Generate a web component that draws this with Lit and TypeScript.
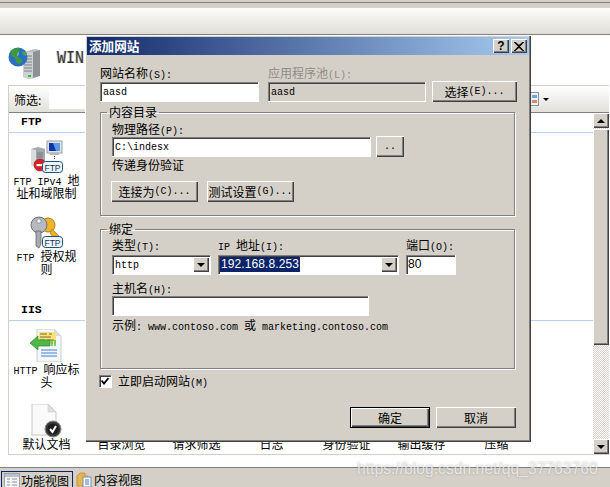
import { LitElement, html, css, svg } from "lit";
import { customElement } from "lit/decorators.js";

const badge = (x: number, y: number) => svg`
  <rect x=${x} y=${y} width="20" height="11" rx="3" fill="#eef6fc" stroke="#1d4f7a"/>
  <text x=${x + 10} y=${y + 9} text-anchor="middle" font-family="Liberation Sans" font-size="8.5" fill="#12324f">FTP</text>`;

const serverIcon = html`<svg width="33" height="33" viewBox="0 0 33 33">
  <polygon points="15,5 27,2 32,3 32,28 21,32 15,30" fill="#b9bcc0"/>
  <polygon points="25,5 32,3 32,29 25,31" fill="#8e9296"/>
  <polygon points="15,5 25,5 25,32 15,30" fill="#cfd2d4"/>
  <path d="M16 9l8 0M16 12l8 0M16 15l8 0M16 18l8 0M16 21l8 0M16 24l8 0" stroke="#7c8084" stroke-width="1"/>
  <rect x="20" y="28" width="3" height="2" fill="#35c53a"/>
  <circle cx="10" cy="10" r="9.5" fill="#2a6fc4"/>
  <circle cx="7" cy="6" r="4" fill="#7fb6ea" opacity=".8"/>
  <path d="M3 4c3-3 7-4 9-2 1 2-3 3-3 6 0 3 4 2 5 5 0 3-3 5-5 3-2-3-1-5-3-6-2 0-4-2-3-6z" fill="#3c9a3a"/>
  <path d="M14 5c2-1 4 0 5 3-1 1-3 1-4 0z" fill="#4aa844"/>
</svg>`;

const ftpLimitIcon = html`<svg width="33" height="33" viewBox="0 0 33 33">
  <polygon points="1,9 8,7 15,9 15,25 8,28 1,25" fill="#a4a8ac"/>
  <polygon points="1,9 6,10 6,27 1,25" fill="#d9dbdd"/>
  <path d="M7 13h6M7 15h6M7 17h6" stroke="#767a7e"/>
  <rect x="4" y="22" width="2" height="2" fill="#35c53a"/>
  <rect x="17" y="1" width="15" height="12" fill="#dfe3e6" stroke="#9aa0a6"/>
  <rect x="19" y="3" width="11" height="8" fill="#0b35b0"/>
  <polygon points="23,3 30,3 30,11 26,11" fill="#5d9be0"/>
  <rect x="20" y="13" width="9" height="2" fill="#b5b9bd"/>
  <path d="M24.5 16v4" stroke="#333" stroke-dasharray="1 1"/>
  <circle cx="10" cy="25" r="6" fill="#d81f26" stroke="#8d1216" stroke-width=".6"/>
  <rect x="6.5" y="24" width="7" height="2.2" fill="#fff"/>
  ${badge(12.5, 21.5)}
</svg>`;

const keyIcon = html`<svg width="33" height="33" viewBox="0 0 33 33">
  <circle cx="18" cy="9" r="7" fill="#f0b429" stroke="#b27a10"/>
  <circle cx="15" cy="7" r="2" fill="#fff"/>
  <path d="M22 13l9 9-2 2-2-1-1 2-6-8z" fill="#efae25" stroke="#b27a10" stroke-width=".8"/>
  <circle cx="9" cy="9" r="8" fill="#b6babf" stroke="#6c7075"/>
  <circle cx="9" cy="5" r="2.2" fill="#f4f4f4" stroke="#6c7075" stroke-width=".6"/>
  <path d="M6 15h5v13l-2 4-3-2z" fill="#a7abb0" stroke="#63676c" stroke-width=".8"/>
  ${badge(12.5, 20.5)}
</svg>`;

const httpDocIcon = html`<svg width="33" height="33" viewBox="0 0 33 33">
  <polygon points="7,0 24,0 31,7 31,33 7,33" fill="#f4f7fa" stroke="#c9ccd0"/>
  <polygon points="24,0 31,7 24,7" fill="#d9dcdf"/>
  <rect x="9" y="3" width="17" height="12" fill="#f7e37c"/>
  <path d="M10 5h7M19 5h3M10 8h11M10 11h5M17 11h7" stroke="#7d6a30" stroke-width="1.2"/>
  <path d="M11 21h16M11 24h16M11 27h16" stroke="#3f7ed0"/>
  <polygon points="0,14 8,7 8,11 20,11 20,17 8,17 8,21" fill="#4fb648" stroke="#2f8a2b" stroke-width=".7"/>
  <path d="M22 11v6M25 11v6" stroke="#4fb648" stroke-width="1.4"/>
</svg>`;

const defaultDocIcon = html`<svg width="33" height="34" viewBox="0 0 33 34">
  <polygon points="2,0 18,0 26,8 26,31 2,31" fill="#fafafa" stroke="#c4c6c9"/>
  <polygon points="18,0 26,8 18,8" fill="#dcdee0" stroke="#c4c6c9" stroke-width=".5"/>
  <circle cx="23" cy="25" r="8" fill="#3a3a3a" stroke="#8a8a8a"/>
  <circle cx="23" cy="25" r="5.6" fill="#1d1d1d"/>
  <path d="M20 25l2.5 3 3.5-6" fill="none" stroke="#fff" stroke-width="2"/>
</svg>`;

const l = (s: string) => html`<span class="l">${s}</span>`;

@customElement("app-root")
export class AppRoot extends LitElement {
  static styles = css`
    :host {
      display: flex;
      flex-direction: column;
      position: relative;
      width: 610px;
      height: 487px;
      overflow: hidden;
      background: #fff;
      color: #000;
      font: 12px/13px "Noto Sans CJK SC", "Liberation Sans", sans-serif;
    }
    .l { font: 10px/1px "Liberation Mono", monospace; white-space: pre; }
    .top1 { height: 2px; background: #d4d0c8; border-bottom: 1px solid #808080; }
    .top2 { height: 5px; background: #d4d0c8; }
    .top3 { height: 26px; background: linear-gradient(#fdfdfc, #dfddd6); border-bottom: 1px solid #808080; }
    .main { flex: 1; display: flex; flex-direction: column; padding: 0 0 12px 8px; min-height: 0; }
    .head { height: 50px; display: flex; padding-top: 12px; box-sizing: border-box; }
    .head .win { font: 15px/17px "Liberation Mono", monospace; margin: 1px 0 0 16px; transform: scaleY(1.25); transform-origin: top; text-shadow: 1px 0 rgba(220,120,20,.3), -1px 0 rgba(20,110,220,.3); color: #333; }
    .panel { flex: 1; display: flex; flex-direction: column; min-height: 0; border: 1px solid #d4d0c8; border-top: 0; margin-right: 1px; border-right: 0; }
    .toolbar { height: 26px; display: flex; align-items: center; background: linear-gradient(#fff, #e2e0da); border-top: 1px solid #d4d0c8; border-bottom: 1px solid #808080; box-sizing: content-box; }
    .filter { margin-left: 5px; width: 35px; flex: none; }
    .filter-in { width: 60px; height: 20px; background: #fff; }
    .tool-right { margin-left: auto; display: flex; align-items: center; gap: 4px; margin-right: 60px; }
    .tiny { width: 0; height: 0; border: 3px solid transparent; border-bottom: 0; border-top: 3px solid #000; }
    .body { flex: 1; display: flex; min-height: 0; }
    .list { flex: 1; overflow: hidden; min-width: 0; }
    .ghead { font: bold 11.5px/15px "Liberation Mono", monospace; padding-left: 12px; height: 18px; border-bottom: 1px solid #b7d2ee; margin-top: 1px; }
    .grid { display: grid; grid-template-columns: repeat(7, 75px); grid-auto-rows: 75px; padding-top: 8px; }
    .grid.ftp { grid-auto-rows: 76px; height: 168px; box-sizing: border-box; padding-top: 7px; }
    .item { display: flex; flex-direction: column; align-items: center; text-align: center; padding: 0 4px; }
    .item .ic { height: 33px; width: 33px; }
    .first { grid-column: 1; }
    .sb { width: 16px; flex: none; display: flex; flex-direction: column; background: repeating-conic-gradient(#d4d0c8 0 25%, #fff 0 50%) 0 0 / 2px 2px; }
    .sbtn { height: 15px; display: flex; align-items: center; justify-content: center; flex: none; }
    .thumb { height: 216px; flex: none; margin-top: 1px; }
    .raised { background: #d4d0c8; box-shadow: inset 1px 1px 0 #fff, inset -1px -1px 0 #404040, inset -2px -2px 0 #808080; }
    .sb .spacer { flex: 1; }
    .up { width: 0; height: 0; border: 4px solid transparent; border-top: 0; border-bottom: 4px solid #000; }
    .down { width: 0; height: 0; border: 4px solid transparent; border-bottom: 0; border-top: 4px solid #000; }
    .tabs { background: #d4d0c8; border-top: 1px solid #808080; display: flex; align-items: flex-start; padding: 3px 0 0 1px; box-sizing: content-box; height: 16px; overflow: hidden; }
    .tab { display: flex; align-items: flex-start; gap: 2px; height: 16px; white-space: nowrap; padding: 1px 0 0 2px; box-sizing: border-box; }
    .tab span { padding-top: 2px; line-height: 12px; }
    .tab.sel { border: 1px solid #0a246a; border-bottom: 0; width: 72px; height: 17px; background: #d4d0c8; gap: 1px; }
    .tab2 { margin-left: 1px; }
    .wm { position: absolute; left: 357px; top: 458px; font: 15.7px/22px "Liberation Sans", sans-serif; color: rgba(255,255,255,.68); text-shadow: 0 0 2px rgba(110,110,110,.55); z-index: 5; white-space: nowrap; }

    .dialog { position: absolute; left: 85px; top: 35px; width: 446px; height: 407px; box-sizing: border-box; background: #d4d0c8; z-index: 2; padding: 2px; box-shadow: inset 1px 1px 0 #fff, inset -1px -1px 0 #404040, inset -2px -2px 0 #808080; display: flex; flex-direction: column; }
    .title { height: 18px; flex: none; background: linear-gradient(90deg, #12296b, #a6caf0); color: #fff; font-weight: 700; font-size: 12.6px; line-height: 20px; display: flex; align-items: center; padding: 0 2px; }
    .title .t { flex: 1; }
    .cap { width: 16px; height: 14px; margin-left: 2px; display: flex; align-items: center; justify-content: center; font: bold 12px/14px "Liberation Sans", sans-serif; color: #000; }
    .form { flex: 1; padding: 10px 13px 0 13px; display: flex; flex-direction: column; }
    .row1 { display: grid; grid-template-columns: 159px 158px 85px; column-gap: 9px; }
    .row1 .f3 { display: flex; margin-left: -3px; width: 85px; align-self: end; }
    .row1 .f3 .btn { width: 85px; }
    .row1 .lbl { height: 17px; }
    .lbl { display: block; height: 16px; line-height: 16px; white-space: nowrap; }
    .dis { color: #8f8c86; }
    .in { height: 20px; box-sizing: border-box; background: #fff; box-shadow: inset 1px 1px 0 #808080, inset 2px 2px 0 #404040; border-right: 1px solid #fff; border-bottom: 1px solid #fff; font: 10px/22px "Liberation Mono", monospace; padding-left: 3px; white-space: nowrap; overflow: hidden; }
    .in.ro { background: #d4d0c8; }
    .btn { height: 21px; box-sizing: border-box; display: flex; align-items: center; justify-content: center; white-space: nowrap; background: #d4d0c8; box-shadow: inset 1px 1px 0 #fff, inset -1px -1px 0 #404040, inset -2px -2px 0 #808080; }
    fieldset { margin: 0; border: 0; padding: 0; min-width: 0; box-sizing: border-box; position: relative; }
    .grp { border: 1px solid #808080; box-shadow: 1px 1px 0 #fff, inset 1px 1px 0 #fff; width: 415px; padding: 0 11px; }
    .grp legend { margin-left: -5px; padding: 0 2px; font-size: 12px; line-height: 16px; height: 16px; }
    .g1 { height: 112px; margin-top: 2px; }
    .g2 { height: 148px; margin-top: 5px; }
    .g1 .lbl { height: 17px; padding-top: 1px; box-sizing: border-box; }
    .inline { display: flex; gap: 5px; }
    .g1 .p { width: 259px; }
    .g1 .bb { width: 28px; margin-top: -1px; }
    .pass { height: 16px; line-height: 16px; font-size: 12px; }
    .acts { display: flex; gap: 9px; margin: 8px 0 0 -1px; }
    .acts .btn { width: 87px; }
    .binds { display: grid; grid-template-columns: 98px 180px 50px; column-gap: 8px; }
    .select { height: 19px; box-sizing: border-box; display: flex; background: #fff; box-shadow: inset 1px 1px 0 #808080, inset 2px 2px 0 #404040, 1px 1px 0 #fff; padding: 2px 1px 1px 2px; margin-top: 2px; }
    .select .v { flex: 1; font: 10px/17px "Liberation Mono", monospace; padding-left: 1px; min-width: 0; }
    .select .ar { width: 16px; height: 15px; flex: none; display: flex; align-items: center; justify-content: center; }
    .hl { background: #0a246a; color: #fff; font: 12px/15px "Liberation Sans", sans-serif; letter-spacing: .1px; padding: 0 1px; display: inline-block; height: 15px; margin-left: -1px; }
    .port { font: 12px/19px "Liberation Sans", sans-serif; margin-top: 2px; padding-left: 2px; }
    .host { margin-top: 5px; }
    .host .in { width: 257px; }
    .eg { margin-top: 1px; height: 16px; line-height: 16px; white-space: nowrap; }
    .chk { display: flex; align-items: center; gap: 7px; margin: 4px 0 0 -1px; height: 16px; line-height: 16px; }
    .box { width: 12px; height: 12px; box-sizing: border-box; background: #fff; box-shadow: inset 1px 1px 0 #808080, inset 2px 2px 0 #404040, 1px 1px 0 #fff; display: flex; align-items: center; justify-content: center; }
    .foot { display: flex; justify-content: flex-end; gap: 6px; margin-top: 18px; }
    .foot .btn { width: 80px; }
    .foot .def { outline: 1px solid #000; outline-offset: -1px; box-shadow: inset 2px 2px 0 #fff, inset -2px -2px 0 #404040, inset -3px -3px 0 #808080; }
  `;

  render() {
    return html`
      <div class="top1"></div>
      <div class="top2"></div>
      <div class="top3"></div>
      <div class="main">
        <div class="head">${serverIcon}<span class="win">WIN</span></div>
        <div class="panel">
          <div class="toolbar">
            <span class="filter">筛选:</span>
            <div class="filter-in"></div>
            <div class="tool-right">
              <svg width="9" height="14" viewBox="0 0 9 14"><rect x=".5" y=".5" width="8" height="13" fill="#eef1f4" stroke="#8a9097"/><rect x="2" y="3" width="5" height="3" fill="#6ea6d8"/><rect x="2" y="8" width="5" height="3" fill="#d88a6e"/></svg>
              <span class="tiny"></span>
            </div>
          </div>
          <div class="body">
            <div class="list">
              <div class="ghead">FTP</div>
              <div class="grid ftp">
                <div class="item first"><div class="ic">${ftpLimitIcon}</div><div>${l("FTP IPv4 ")}地址和域限制</div></div>
                <div class="item first"><div class="ic">${keyIcon}</div><div>${l("FTP ")}授权规则</div></div>
              </div>
              <div class="ghead">IIS</div>
              <div class="grid">
                <div class="item first"><div class="ic">${httpDocIcon}</div><div>${l("HTTP ")}响应标头</div></div>
                <div class="item first"><div class="ic">${defaultDocIcon}</div><div>默认文档</div></div>
                <div class="item"><div class="ic"></div><div>目录浏览</div></div>
                <div class="item"><div class="ic"></div><div>请求筛选</div></div>
                <div class="item"><div class="ic"></div><div>日志</div></div>
                <div class="item"><div class="ic"></div><div>身份验证</div></div>
                <div class="item"><div class="ic"></div><div>输出缓存</div></div>
                <div class="item"><div class="ic"></div><div>压缩</div></div>
              </div>
            </div>
            <div class="sb">
              <div class="sbtn raised"><span class="up"></span></div>
              <div class="thumb raised"></div>
              <div class="spacer"></div>
              <div class="sbtn raised"><span class="down"></span></div>
            </div>
          </div>
        </div>
      </div>
      <div class="tabs">
        <div class="tab sel">
          <svg width="16" height="15" viewBox="0 0 16 15"><rect x=".5" y=".5" width="15" height="14" fill="#f4f6f8" stroke="#9aa3ab"/><rect x="1" y="1" width="14" height="3" fill="#b9c3cc"/><path d="M3 6h3M3 9h3M3 12h3M8 6h5M8 9h5M8 12h5" stroke="#8a949c"/></svg>
          <span>功能视图</span>
        </div>
        <div class="tab tab2">
          <svg width="16" height="16" viewBox="0 0 16 16"><path d="M1 14V4l3-3h5v3h3l-1 10z" fill="#e8b64c" stroke="#b8862a" stroke-width=".7"/><rect x="7" y="5" width="8" height="10" fill="#f4f6fa" stroke="#7d93b5"/><path d="M9 8h4M9 10h4M9 12h4" stroke="#4f7fc0"/></svg>
          <span>内容视图</span>
        </div>
      </div>

      <div class="dialog">
        <div class="title">
          <span class="t">添加网站</span>
          <span class="cap raised">?</span>
          <span class="cap raised">
            <svg width="10" height="9" viewBox="0 0 10 9"><path d="M1 0l4 3.3L9 0h1L5.7 4.5 10 9H9L5 5.5 1 9H0l4.3-4.5L0 0z" fill="#000" stroke="#000" stroke-width=".7"/></svg>
          </span>
        </div>
        <div class="form">
          <div class="row1">
            <div><span class="lbl">网站名称${l("(S):")}</span><div class="in">aasd</div></div>
            <div><span class="lbl dis">应用程序池${l("(L):")}</span><div class="in ro">aasd</div></div>
            <div class="f3"><div class="btn">选择${l("(E)...")}</div></div>
          </div>

          <fieldset class="grp g1">
            <legend>内容目录</legend>
            <span class="lbl">物理路径${l("(P):")}</span>
            <div class="inline">
              <div class="in p">C:\\indesx</div>
              <div class="btn bb">${l("..")}</div>
            </div>
            <div class="pass">传递身份验证</div>
            <div class="acts">
              <div class="btn">连接为${l("(C)...")}</div>
              <div class="btn">测试设置${l("(G)...")}</div>
            </div>
          </fieldset>

          <fieldset class="grp g2">
            <legend>绑定</legend>
            <div class="binds">
              <div>
                <span class="lbl">类型${l("(T):")}</span>
                <div class="select"><span class="v">http</span><span class="ar raised"><span class="down"></span></span></div>
              </div>
              <div>
                <span class="lbl">${l("IP ")}地址${l("(I):")}</span>
                <div class="select"><span class="v"><span class="hl">192.168.8.253</span></span><span class="ar raised"><span class="down"></span></span></div>
              </div>
              <div>
                <span class="lbl">端口${l("(O):")}</span>
                <div class="in port">80</div>
              </div>
            </div>
            <div class="host">
              <span class="lbl">主机名${l("(H):")}</span>
              <div class="in"></div>
            </div>
            <div class="eg">示例${l(": www.contoso.com ")}或${l(" marketing.contoso.com")}</div>
          </fieldset>

          <div class="chk">
            <span class="box"><svg width="8" height="8" viewBox="0 0 8 8"><path d="M.5 3.5l2.5 3L7.5 1" fill="none" stroke="#000" stroke-width="1.8"/></svg></span>
            <span>立即启动网站${l("(M)")}</span>
          </div>

          <div class="foot">
            <div class="btn def">确定</div>
            <div class="btn">取消</div>
          </div>
        </div>
      </div>
      <div class="wm">https://blog.csdn.net/qq_37763760</div>
    `;
  }
}
